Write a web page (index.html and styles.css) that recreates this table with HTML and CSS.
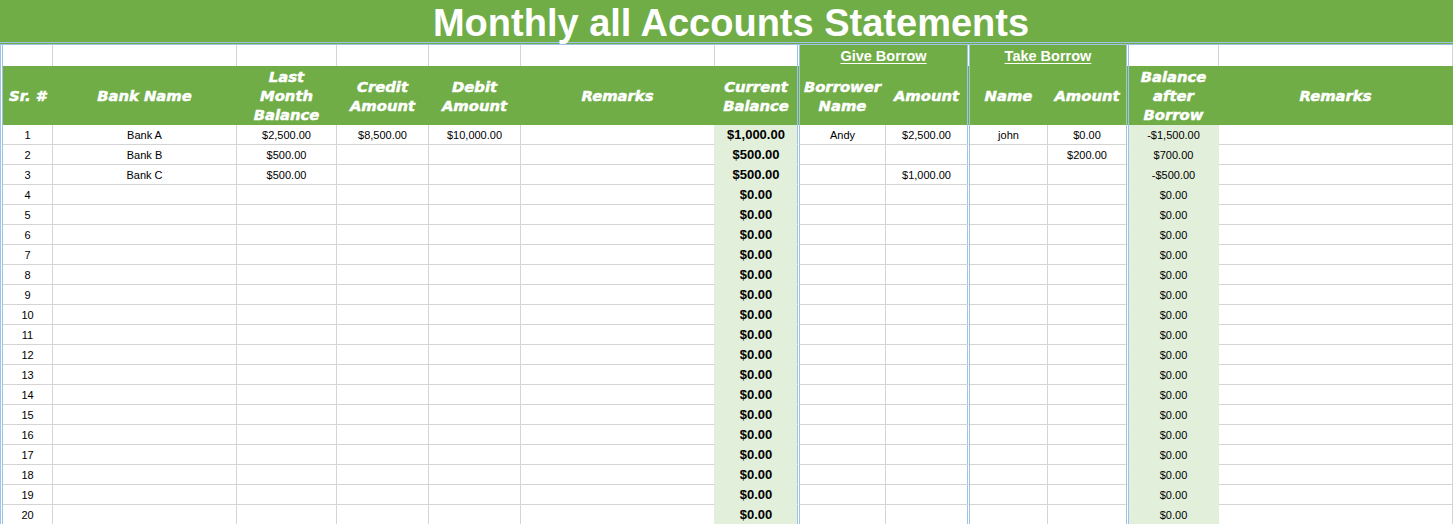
FILE: index.html
```html
<!DOCTYPE html>
<html lang="en">
  <head>
    <meta charset="UTF-8" />
    <meta name="viewport" content="width=device-width, initial-scale=1.0" />
    <title>Monthly all Accounts Statements</title>
    <link rel="stylesheet" href="styles.css">
  </head>

  <body>
    <div class="title">Monthly all Accounts Statements</div>

    <div class="sheet">
      <!-- group titles -->
      <div class="row top">
        <div class="c"></div>
        <div class="c"></div>
        <div class="c"></div>
        <div class="c"></div>
        <div class="c"></div>
        <div class="c"></div>
        <div class="c sep"></div>
        <div class="c grp sep"><span>Give Borrow</span></div>
        <div class="c grp sep"><span>Take Borrow</span></div>
        <div class="c"></div>
        <div class="c"></div>
      </div>

      <!-- column headers -->
      <div class="row head">
        <div class="c">Sr. #</div>
        <div class="c">Bank Name</div>
        <div class="c">Last<br>Month<br>Balance</div>
        <div class="c">Credit<br>Amount</div>
        <div class="c">Debit<br>Amount</div>
        <div class="c">Remarks</div>
        <div class="c sep">Current<br>Balance</div>
        <div class="c">Borrower<br>Name</div>
        <div class="c sep">Amount</div>
        <div class="c">Name</div>
        <div class="c sep">Amount</div>
        <div class="c">Balance<br>after<br>Borrow</div>
        <div class="c">Remarks</div>
      </div>

      <!-- data -->
      <div class="row data"><div class="c">1</div><div class="c">Bank A</div><div class="c">$2,500.00</div><div class="c">$8,500.00</div><div class="c">$10,000.00</div><div class="c"></div><div class="c">$1,000.00</div><div class="c">Andy</div><div class="c">$2,500.00</div><div class="c">john</div><div class="c">$0.00</div><div class="c">-$1,500.00</div><div class="c"></div></div>
      <div class="row data"><div class="c">2</div><div class="c">Bank B</div><div class="c">$500.00</div><div class="c"></div><div class="c"></div><div class="c"></div><div class="c">$500.00</div><div class="c"></div><div class="c"></div><div class="c"></div><div class="c">$200.00</div><div class="c">$700.00</div><div class="c"></div></div>
      <div class="row data"><div class="c">3</div><div class="c">Bank C</div><div class="c">$500.00</div><div class="c"></div><div class="c"></div><div class="c"></div><div class="c">$500.00</div><div class="c"></div><div class="c">$1,000.00</div><div class="c"></div><div class="c"></div><div class="c">-$500.00</div><div class="c"></div></div>
      <div class="row data"><div class="c">4</div><div class="c"></div><div class="c"></div><div class="c"></div><div class="c"></div><div class="c"></div><div class="c">$0.00</div><div class="c"></div><div class="c"></div><div class="c"></div><div class="c"></div><div class="c">$0.00</div><div class="c"></div></div>
      <div class="row data"><div class="c">5</div><div class="c"></div><div class="c"></div><div class="c"></div><div class="c"></div><div class="c"></div><div class="c">$0.00</div><div class="c"></div><div class="c"></div><div class="c"></div><div class="c"></div><div class="c">$0.00</div><div class="c"></div></div>
      <div class="row data"><div class="c">6</div><div class="c"></div><div class="c"></div><div class="c"></div><div class="c"></div><div class="c"></div><div class="c">$0.00</div><div class="c"></div><div class="c"></div><div class="c"></div><div class="c"></div><div class="c">$0.00</div><div class="c"></div></div>
      <div class="row data"><div class="c">7</div><div class="c"></div><div class="c"></div><div class="c"></div><div class="c"></div><div class="c"></div><div class="c">$0.00</div><div class="c"></div><div class="c"></div><div class="c"></div><div class="c"></div><div class="c">$0.00</div><div class="c"></div></div>
      <div class="row data"><div class="c">8</div><div class="c"></div><div class="c"></div><div class="c"></div><div class="c"></div><div class="c"></div><div class="c">$0.00</div><div class="c"></div><div class="c"></div><div class="c"></div><div class="c"></div><div class="c">$0.00</div><div class="c"></div></div>
      <div class="row data"><div class="c">9</div><div class="c"></div><div class="c"></div><div class="c"></div><div class="c"></div><div class="c"></div><div class="c">$0.00</div><div class="c"></div><div class="c"></div><div class="c"></div><div class="c"></div><div class="c">$0.00</div><div class="c"></div></div>
      <div class="row data"><div class="c">10</div><div class="c"></div><div class="c"></div><div class="c"></div><div class="c"></div><div class="c"></div><div class="c">$0.00</div><div class="c"></div><div class="c"></div><div class="c"></div><div class="c"></div><div class="c">$0.00</div><div class="c"></div></div>
      <div class="row data"><div class="c">11</div><div class="c"></div><div class="c"></div><div class="c"></div><div class="c"></div><div class="c"></div><div class="c">$0.00</div><div class="c"></div><div class="c"></div><div class="c"></div><div class="c"></div><div class="c">$0.00</div><div class="c"></div></div>
      <div class="row data"><div class="c">12</div><div class="c"></div><div class="c"></div><div class="c"></div><div class="c"></div><div class="c"></div><div class="c">$0.00</div><div class="c"></div><div class="c"></div><div class="c"></div><div class="c"></div><div class="c">$0.00</div><div class="c"></div></div>
      <div class="row data"><div class="c">13</div><div class="c"></div><div class="c"></div><div class="c"></div><div class="c"></div><div class="c"></div><div class="c">$0.00</div><div class="c"></div><div class="c"></div><div class="c"></div><div class="c"></div><div class="c">$0.00</div><div class="c"></div></div>
      <div class="row data"><div class="c">14</div><div class="c"></div><div class="c"></div><div class="c"></div><div class="c"></div><div class="c"></div><div class="c">$0.00</div><div class="c"></div><div class="c"></div><div class="c"></div><div class="c"></div><div class="c">$0.00</div><div class="c"></div></div>
      <div class="row data"><div class="c">15</div><div class="c"></div><div class="c"></div><div class="c"></div><div class="c"></div><div class="c"></div><div class="c">$0.00</div><div class="c"></div><div class="c"></div><div class="c"></div><div class="c"></div><div class="c">$0.00</div><div class="c"></div></div>
      <div class="row data"><div class="c">16</div><div class="c"></div><div class="c"></div><div class="c"></div><div class="c"></div><div class="c"></div><div class="c">$0.00</div><div class="c"></div><div class="c"></div><div class="c"></div><div class="c"></div><div class="c">$0.00</div><div class="c"></div></div>
      <div class="row data"><div class="c">17</div><div class="c"></div><div class="c"></div><div class="c"></div><div class="c"></div><div class="c"></div><div class="c">$0.00</div><div class="c"></div><div class="c"></div><div class="c"></div><div class="c"></div><div class="c">$0.00</div><div class="c"></div></div>
      <div class="row data"><div class="c">18</div><div class="c"></div><div class="c"></div><div class="c"></div><div class="c"></div><div class="c"></div><div class="c">$0.00</div><div class="c"></div><div class="c"></div><div class="c"></div><div class="c"></div><div class="c">$0.00</div><div class="c"></div></div>
      <div class="row data"><div class="c">19</div><div class="c"></div><div class="c"></div><div class="c"></div><div class="c"></div><div class="c"></div><div class="c">$0.00</div><div class="c"></div><div class="c"></div><div class="c"></div><div class="c"></div><div class="c">$0.00</div><div class="c"></div></div>
      <div class="row data"><div class="c">20</div><div class="c"></div><div class="c"></div><div class="c"></div><div class="c"></div><div class="c"></div><div class="c">$0.00</div><div class="c"></div><div class="c"></div><div class="c"></div><div class="c"></div><div class="c">$0.00</div><div class="c"></div></div>
    </div>
  </body>
</html>
```

FILE: styles.css
```css
body {
  margin: 0;
  font-family: "Liberation Sans", Arial, sans-serif;
  background-color: #fff;
  color: #000;
  overflow: hidden;
}

.title {
  height: 42px;
  line-height: 46px;
  padding-left: 9px;
  background-color: #70ad47;
  color: #fff;
  font-size: 38px;
  font-weight: bold;
  text-align: center;
  border-bottom: 3px double #9dc3e6;
}

.sheet {
  border-left: 3px double #9dc3e6;
}

.row {
  display: grid;
  grid-template-columns: 50px 184px 100px 92px 92px 194px 85px 86px 84px 78px 81px 90px 1fr;
}

.c {
  display: flex;
  align-items: center;
  justify-content: center;
  text-align: center;
  border-right: 1px solid #d4d4d4;
  white-space: nowrap;
  overflow: hidden;
}

.row .sep {
  border-right: 3px double #9dc3e6;
}

/* group title row */
.top {
  height: 21px;
}

.grp {
  grid-column: span 2;
  background-color: #70ad47;
  background-clip: padding-box;
  color: #fff;
  font-size: 14.5px;
  font-weight: bold;
  text-decoration: underline;
  text-underline-offset: 2px;
}

/* header row */
.head {
  height: 59px;
  background-color: #70ad47;
}

.head .c {
  border-right-color: #70ad47;
  color: #fff;
  font-family: "DejaVu Sans", sans-serif;
  font-size: 14.8px;
  font-weight: bold;
  font-style: italic;
  line-height: 19px;
  -webkit-text-stroke: 0.5px #fff;
}

.head .c.sep {
  border-right-color: #9dc3e6;
  background-color: #70ad47;
  background-clip: padding-box;
}

/* data rows */
.data {
  height: 20px;
  font-size: 11px;
}

.data .c {
  border-bottom: 1px solid #d4d4d4;
}

.data .c:nth-child(6) {
  border-right-color: #e2efda;
}

.data .c:nth-child(7) {
  border-right: 3px double #9dc3e6;
  border-bottom-color: #e2efda;
  background-color: #e2efda;
  background-clip: padding-box;
  font-size: 13px;
  font-weight: bold;
}

.data .c:nth-child(9),
.data .c:nth-child(11) {
  border-right: 3px double #9dc3e6;
}

.data .c:nth-child(12) {
  border-right-color: #e2efda;
  border-bottom-color: #e2efda;
  background-color: #e2efda;
}
```
